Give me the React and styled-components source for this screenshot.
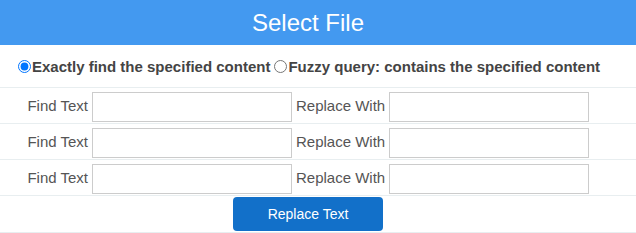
import React from "react";
import styled, { createGlobalStyle } from "styled-components";

const GlobalStyle = createGlobalStyle`
  html, body {
    margin: 0;
    padding: 0;
    background: #ffffff;
    font-family: "Liberation Sans", Arial, sans-serif;
  }
`;

const Page = styled.div`
  width: 636px;
`;

const Title = styled.h1`
  margin: 0;
  height: 45px;
  line-height: 45px;
  padding-right: 20px;
  background-color: #4399f0;
  color: #ffffff;
  font-size: 24px;
  font-weight: normal;
  text-align: center;
`;

const ModeRow = styled.div`
  display: flex;
  align-items: center;
  height: 42px;
  padding-left: 18px;
  font-size: 15px;
  font-weight: bold;
  color: #444444;
  white-space: nowrap;
`;

const ModeOption = styled.label`
  display: inline-flex;
  align-items: center;
  margin-right: ${(p) => (p.$last ? "0" : "4px")};
  input {
    width: 13px;
    height: 13px;
    margin: 0 1px 0 0;
  }
`;

const Table = styled.div`
  border-bottom: 1px solid #e8eef0;
`;

const Row = styled.div`
  display: grid;
  grid-template-columns: 88px 200px 89px 200px 1fr;
  column-gap: 4px;
  align-items: center;
  height: 35px;
  border-top: 1px solid #e8eef0;
  font-size: 15px;
  color: #555555;
`;

const Label = styled.span`
  text-align: ${(p) => (p.$right ? "right" : "left")};
  white-space: nowrap;
`;

const TextBox = styled.input`
  box-sizing: border-box;
  width: 200px;
  height: 30px;
  margin-top: 2px;
  padding: 4px 6px;
  border: 1px solid #cccccc;
  font-size: 14px;
  font-family: inherit;
  outline: none;
`;

const ActionRow = styled.div`
  display: flex;
  justify-content: center;
  padding: 1px 20px 1px 0;
  border-top: 1px solid #e8eef0;
`;

const ReplaceButton = styled.button`
  width: 150px;
  height: 34px;
  border: none;
  border-radius: 4px;
  background-color: #1270c9;
  color: #ffffff;
  font-size: 14px;
  font-family: inherit;
  cursor: pointer;
`;

const App = () => {
  const pairs = [0, 1, 2];

  return (
    <Page>
      <GlobalStyle />
      <Title>Select File</Title>
      <ModeRow>
        <ModeOption>
          <input type="radio" name="mode" defaultChecked />
          Exactly find the specified content
        </ModeOption>
        <ModeOption $last>
          <input type="radio" name="mode" />
          Fuzzy query: contains the specified content
        </ModeOption>
      </ModeRow>
      <Table>
        {pairs.map((i) => (
          <Row key={i}>
            <Label $right>Find Text</Label>
            <TextBox type="text" />
            <Label>Replace With</Label>
            <TextBox type="text" />
            <span />
          </Row>
        ))}
        <ActionRow>
          <ReplaceButton>Replace Text</ReplaceButton>
        </ActionRow>
      </Table>
    </Page>
  );
};

export default App;
